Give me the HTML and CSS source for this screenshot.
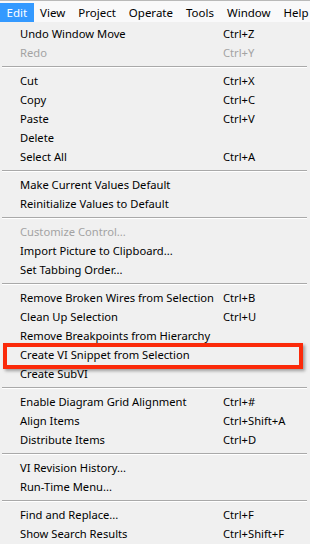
FILE: index.html
```html
<!DOCTYPE html>
<html>
<head>
<meta charset="utf-8">
<title>Edit menu</title>
<link rel="stylesheet" href="styles.css">
</head>
<body>
<div class="menubar">
	<span class="mb-item active">Edit</span>
	<span class="mb-item">View</span>
	<span class="mb-item">Project</span>
	<span class="mb-item">Operate</span>
	<span class="mb-item">Tools</span>
	<span class="mb-item">Window</span>
	<span class="mb-item">Help</span>
</div>
<div class="menu">
	<div class="item"><span>Undo Window Move</span><span>Ctrl+Z</span></div>
	<div class="item off"><span>Redo</span><span>Ctrl+Y</span></div>
	<div class="sep"></div>
	<div class="item"><span>Cut</span><span>Ctrl+X</span></div>
	<div class="item"><span>Copy</span><span>Ctrl+C</span></div>
	<div class="item"><span>Paste</span><span>Ctrl+V</span></div>
	<div class="item"><span>Delete</span><span></span></div>
	<div class="item"><span>Select All</span><span>Ctrl+A</span></div>
	<div class="sep"></div>
	<div class="item"><span>Make Current Values Default</span><span></span></div>
	<div class="item"><span>Reinitialize Values to Default</span><span></span></div>
	<div class="sep"></div>
	<div class="item off"><span>Customize Control...</span><span></span></div>
	<div class="item"><span>Import Picture to Clipboard...</span><span></span></div>
	<div class="item"><span>Set Tabbing Order...</span><span></span></div>
	<div class="sep"></div>
	<div class="item"><span>Remove Broken Wires from Selection</span><span>Ctrl+B</span></div>
	<div class="item"><span>Clean Up Selection</span><span>Ctrl+U</span></div>
	<div class="item"><span>Remove Breakpoints from Hierarchy</span><span></span></div>
	<div class="item marked"><span>Create VI Snippet from Selection</span><span></span></div>
	<div class="item"><span>Create SubVI</span><span></span></div>
	<div class="sep"></div>
	<div class="item"><span>Enable Diagram Grid Alignment</span><span>Ctrl+#</span></div>
	<div class="item"><span>Align Items</span><span>Ctrl+Shift+A</span></div>
	<div class="item"><span>Distribute Items</span><span>Ctrl+D</span></div>
	<div class="sep"></div>
	<div class="item"><span>VI Revision History...</span><span></span></div>
	<div class="item"><span>Run-Time Menu...</span><span></span></div>
	<div class="sep"></div>
	<div class="item"><span>Find and Replace...</span><span>Ctrl+F</span></div>
	<div class="item"><span>Show Search Results</span><span>Ctrl+Shift+F</span></div>
</div>
</body>
</html>
```

FILE: styles.css
```css
*{ margin:0; padding:0; box-sizing:border-box;}
body{ background:#f0f0f0; font-family:"Noto Sans","Open Sans",sans-serif; font-size:11.2px; color:#000; width:310px; height:544px; overflow:hidden;}

.menubar{ height:22px; border-top:1px solid #b9b9b9; padding-top:2px; background:#f9f9fa; display:flex; white-space:nowrap; overflow:hidden;}
.mb-item{ height:19px; line-height:19px; padding:0 6.5px; font-size:11.5px;}
.mb-item.active{ background:#3399ff; color:#fff;}

.menu{ padding-top:2px; width:307px;}
.item{ height:19px; line-height:19px; display:grid; grid-template-columns:203px 1fr; padding-left:20px; white-space:nowrap;}
.item.off{ color:#a3a3a3;}
.sep{ height:9px; padding-top:4px;}
.sep::before{ content:""; display:block; height:1px; margin-left:2px; background:#a9a9a9; border-bottom:1px solid #fff; box-sizing:content-box;}

.marked{ position:relative;}
.marked::after{ content:""; position:absolute; left:3px; right:4px; top:-2px; bottom:-5px; border:4px solid #fb2a0a; box-shadow:2px 2px 3px rgba(0,0,0,0.35);}
```
